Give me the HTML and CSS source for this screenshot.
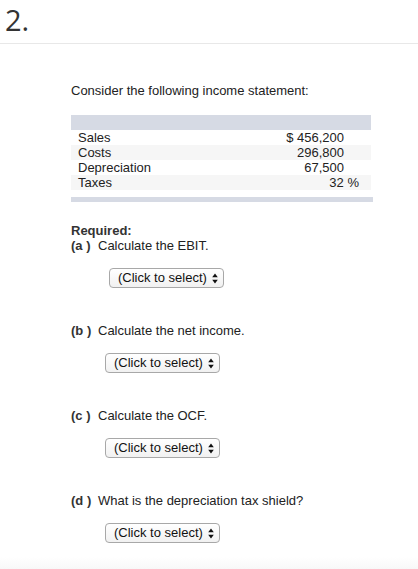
FILE: index.html
```html
<!DOCTYPE html>
<html lang="en">
<head>
<meta charset="utf-8">
<title>Question 2</title>
<link rel="stylesheet" href="styles.css">
</head>
<body>
<header class="qhead"><span class="qnum">2.</span></header>
<main class="question">
  <p class="intro">Consider the following income statement:</p>
  <div class="stmt">
    <div class="stmt-head"></div>
    <div class="stmt-row"><span>Sales</span><span>$ 456,200</span></div>
    <div class="stmt-row alt"><span>Costs</span><span>296,800</span></div>
    <div class="stmt-row"><span>Depreciation</span><span>67,500</span></div>
    <div class="stmt-row alt pct"><span>Taxes</span><span>32 %</span></div>
    <div class="stmt-foot"></div>
  </div>
  <div class="required">Required:</div>
  <section class="part part-a">
    <div class="part-q"><b class="part-tag">(a )</b><span>Calculate the EBIT.</span></div>
    <div class="picker"><span>(Click to select)</span><svg class="updown" width="6" height="11" viewBox="0 0 6 11"><path d="M3 0.5 L5.8 4.3 L0.2 4.3 Z M3 10.5 L5.8 6.7 L0.2 6.7 Z" fill="#111"/></svg></div>
  </section>
  <section class="part">
    <div class="part-q"><b class="part-tag">(b )</b><span>Calculate the net income.</span></div>
    <div class="picker"><span>(Click to select)</span><svg class="updown" width="6" height="11" viewBox="0 0 6 11"><path d="M3 0.5 L5.8 4.3 L0.2 4.3 Z M3 10.5 L5.8 6.7 L0.2 6.7 Z" fill="#111"/></svg></div>
  </section>
  <section class="part">
    <div class="part-q"><b class="part-tag">(c )</b><span>Calculate the OCF.</span></div>
    <div class="picker"><span>(Click to select)</span><svg class="updown" width="6" height="11" viewBox="0 0 6 11"><path d="M3 0.5 L5.8 4.3 L0.2 4.3 Z M3 10.5 L5.8 6.7 L0.2 6.7 Z" fill="#111"/></svg></div>
  </section>
  <section class="part">
    <div class="part-q"><b class="part-tag">(d )</b><span>What is the depreciation tax shield?</span></div>
    <div class="picker"><span>(Click to select)</span><svg class="updown" width="6" height="11" viewBox="0 0 6 11"><path d="M3 0.5 L5.8 4.3 L0.2 4.3 Z M3 10.5 L5.8 6.7 L0.2 6.7 Z" fill="#111"/></svg></div>
  </section>
</main>
<div class="page-end"></div>
</body>
</html>
```

FILE: styles.css
```css
html, body {
  margin: 0;
  padding: 0;
  background: #fff;
}
body {
  font-family: "Liberation Sans", Arial, sans-serif;
  font-size: 13px;
  line-height: 15px;
  color: #222;
}
.qhead {
  height: 44px;
  border-bottom: 1px solid #e8e8e8;
  padding-left: 5px;
  box-sizing: border-box;
}
.qnum {
  font-family: "Open Sans", sans-serif;
  font-size: 29px;
  line-height: normal;
  color: #333;
  display: block;
}
.question {
  padding-left: 71px;
}
.intro {
  margin: 39px 0 0 0;
}
.stmt {
  width: 302px;
  margin-top: 17px;
}
.stmt-head {
  width: 300px;
  height: 15px;
  background: #d6dae4;
}
.stmt-row {
  width: 300px;
  height: 15px;
  box-sizing: border-box;
  display: flex;
  justify-content: space-between;
  padding: 0 27px 0 7px;
  background: #fff;
}
.stmt-row.alt {
  background: #f6f6f6;
}
.stmt-row.pct {
  padding-right: 12px;
}
.stmt-foot {
  margin-top: 7px;
  height: 5px;
  background: #d6dae4;
}
.required {
  margin-top: 21px;
  font-weight: bold;
  color: #333;
}
.part {
  margin-bottom: 35px;
}
.part-q {
  display: flex;
}
.part-tag {
  width: 27px;
  flex: none;
  color: #333;
}
.picker {
  margin-top: 15px;
  margin-left: 34px;
  width: 115px;
  height: 20px;
  box-sizing: border-box;
  border: 1px solid #a8a8a8;
  border-radius: 4px;
  background: linear-gradient(#ffffff, #f1f1f1);
  display: flex;
  align-items: center;
  justify-content: space-between;
  padding: 0 5px 0 8px;
  color: #111;
  line-height: 18px;
}
.part-a .picker {
  margin-left: 38px;
}
.updown {
  display: block;
}
.page-end {
  height: 13px;
  margin-top: -21px;
  background: linear-gradient(#ffffff, #f7f7f7);
}
```
